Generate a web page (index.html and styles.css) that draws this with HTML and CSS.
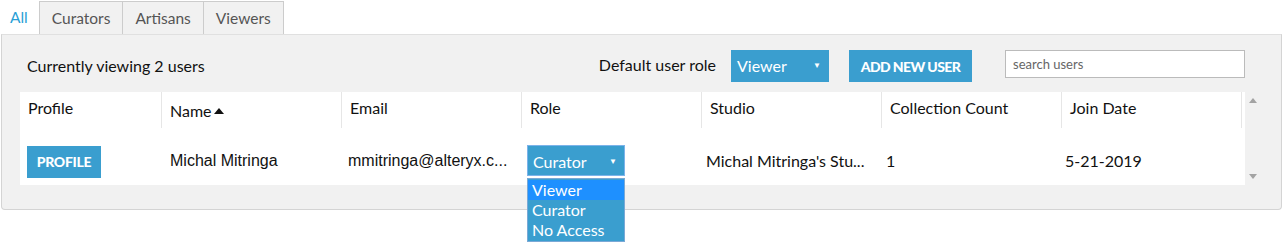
FILE: index.html
```html
<!DOCTYPE html>
<html lang="en">
<head>
    <meta charset="UTF-8">
    <title>Users</title>
    <link rel="stylesheet" href="styles.css">
</head>
<body>
    <div class="tabs">
        <div class="tab active">All</div>
        <div class="tab">Curators</div>
        <div class="tab">Artisans</div>
        <div class="tab">Viewers</div>
    </div>
    <div class="panel">
        <div class="toolbar">
            <div class="count">Currently viewing 2 users</div>
            <div class="controls">
                <span class="role-label">Default user role</span>
                <div class="select wide">Viewer <span class="caret">&#9660;</span></div>
                <button class="btn add">ADD NEW USER</button>
                <input class="search" type="text" placeholder="search users">
            </div>
        </div>
        <div class="grid-wrap">
            <div class="grid">
                <div class="row head">
                    <div class="cell c-profile">Profile</div>
                    <div class="cell sorted">Name<span class="sort"></span></div>
                    <div class="cell">Email</div>
                    <div class="cell">Role</div>
                    <div class="cell">Studio</div>
                    <div class="cell">Collection Count</div>
                    <div class="cell">Join Date</div>
                </div>
                <div class="row body">
                    <div class="cell c-profile"><button class="btn profile">PROFILE</button></div>
                    <div class="cell arial name">Michal Mitringa</div>
                    <div class="cell arial">mmitringa@alteryx.c...</div>
                    <div class="cell role">
                        <div class="select open">Curator <span class="caret">&#9660;</span></div>
                        <ul class="options">
                            <li class="hl">Viewer</li>
                            <li>Curator</li>
                            <li>No Access</li>
                        </ul>
                    </div>
                    <div class="cell studio">Michal Mitringa's Stu...</div>
                    <div class="cell num">1</div>
                    <div class="cell date">5-21-2019</div>
                </div>
            </div>
            <div class="scroll">
                <span class="arrow up"></span>
                <span class="arrow down"></span>
            </div>
        </div>
    </div>
</body>
</html>
```

FILE: styles.css
```css
body {
    font-family: Lato, "Noto Sans", sans-serif;
    font-size: 16px;
    color: #111;
    background-color: #fff;
    margin: 0;
    padding: 1px 2px 0 1px;
    min-height: 242px;
    box-sizing: border-box;
}
.tabs {
    display: flex;
    height: 33px;
}
.tab {
    padding: 0 12px;
    line-height: 33px;
    font-size: 15.5px;
    background-color: #f1f1f1;
    color: #555;
    border: 1px solid #ccc;
    border-bottom: none;
    border-left: none;
}
.tab.active {
    background-color: #fff;
    color: #2a9fd6;
    border-right: 1px solid #ccc;
    padding: 0 11px 0 10px;
    margin-left: -1px;
    border-top: none;
}
.panel {
    background-color: #f1f1f1;
    border: 1px solid #d4d4d4;
    border-top: 1px solid #e0e0e0;
    border-radius: 0 0 4px 4px;
    padding: 15px 20px 24px 18px;
}
.toolbar {
    display: flex;
    justify-content: space-between;
    align-items: center;
    height: 32px;
    margin-bottom: 10px;
    margin-right: 16px;
}
.count {
    padding-left: 7px;
    padding-bottom: 2px;
}
.controls {
    display: flex;
    align-items: center;
}
.role-label {
    margin-right: 15px;
    padding-bottom: 3px;
}
.select {
    background-color: #3a9ecf;
    color: #fff;
    height: 32px;
    line-height: 31px;
    padding: 0 6px;
    display: flex;
    justify-content: space-between;
    box-sizing: border-box;
    font-size: 16px;
}
.select.wide {
    width: 98px;
}
.caret {
    font-size: 8px;
    padding-right: 2px;
}
.btn {
    background-color: #3a9ecf;
    color: #fff;
    border: none;
    font-family: Lato, sans-serif;
    font-weight: 900;
    font-size: 14px;
    letter-spacing: -0.6px;
    height: 32px;
    padding: 0 10px;
}
.btn.add {
    margin-left: 20px;
    width: 123px;
}
.search {
    margin-left: 33px;
    width: 240px;
    height: 28px;
    box-sizing: border-box;
    border: 1px solid #bbb;
    font-family: Lato, sans-serif;
    font-size: 13px;
    padding: 0 7px;
    margin-bottom: 4px;
}
.search::placeholder {
    color: #666;
}
.grid-wrap {
    display: flex;
}
.grid {
    background-color: #fff;
    width: 1225px;
}
.scroll {
    width: 16px;
    display: flex;
    flex-direction: column;
    justify-content: space-between;
    align-items: center;
    padding: 6px 0 6px;
    box-sizing: border-box;
    height: 93px;
    background-color: #f1f1f1;
}
.arrow {
    width: 0;
    height: 0;
    border-left: 4px solid transparent;
    border-right: 4px solid transparent;
}
.arrow.up {
    border-bottom: 5px solid #a3a3a3;
}
.arrow.down {
    border-top: 5px solid #a3a3a3;
}
.row {
    display: grid;
    grid-template-columns: 142px repeat(6, 180px);
}
.row.head .cell {
    height: 36px;
    line-height: 31px;
    border-right: 1px solid #e6e6e6;
    padding-left: 8px;
}
.row.head .cell.sorted {
    line-height: 37px;
}
.sort {
    display: inline-block;
    width: 0;
    height: 0;
    margin-left: 2px;
    margin-bottom: 3px;
    border-left: 5px solid transparent;
    border-right: 5px solid transparent;
    border-bottom: 6px solid #111;
}
.row.body {
    height: 57px;
    align-items: center;
}
.row.body .cell {
    padding-left: 6px;
    padding-top: 8px;
}
.row.body .c-profile {
    padding-left: 7px;
    padding-top: 10px;
}
.btn.profile {
    height: 32px;
    width: 74px;
    padding: 0;
    letter-spacing: -0.3px;
}
.arial {
    font-family: "Liberation Sans", Arial, sans-serif;
    font-size: 16px;
}
.name {
    padding-left: 8px !important;
}
.role {
    position: relative;
    padding-left: 5px !important;
    padding-top: 8px !important;
}
.select.open {
    width: 98px;
    height: 31px;
    border: 1px solid #7cb3ea;
    padding: 0 5px;
}
.options {
    position: absolute;
    top: 41px;
    left: 5px;
    width: 98px;
    margin: 0;
    padding: 1px 0;
    list-style: none;
    background-color: #3a9ecf;
    border: 1px solid #7aa9d6;
    box-sizing: border-box;
    color: #fff;
    font-size: 16px;
    z-index: 2;
}
.options li {
    height: 20px;
    line-height: 19px;
    padding-left: 4px;
}
.options li.hl {
    background-color: #1e90ff;
}
.studio {
    padding-left: 4px !important;
}
.num {
    padding-left: 4px !important;
}
.date {
    padding-left: 3px !important;
}
```
